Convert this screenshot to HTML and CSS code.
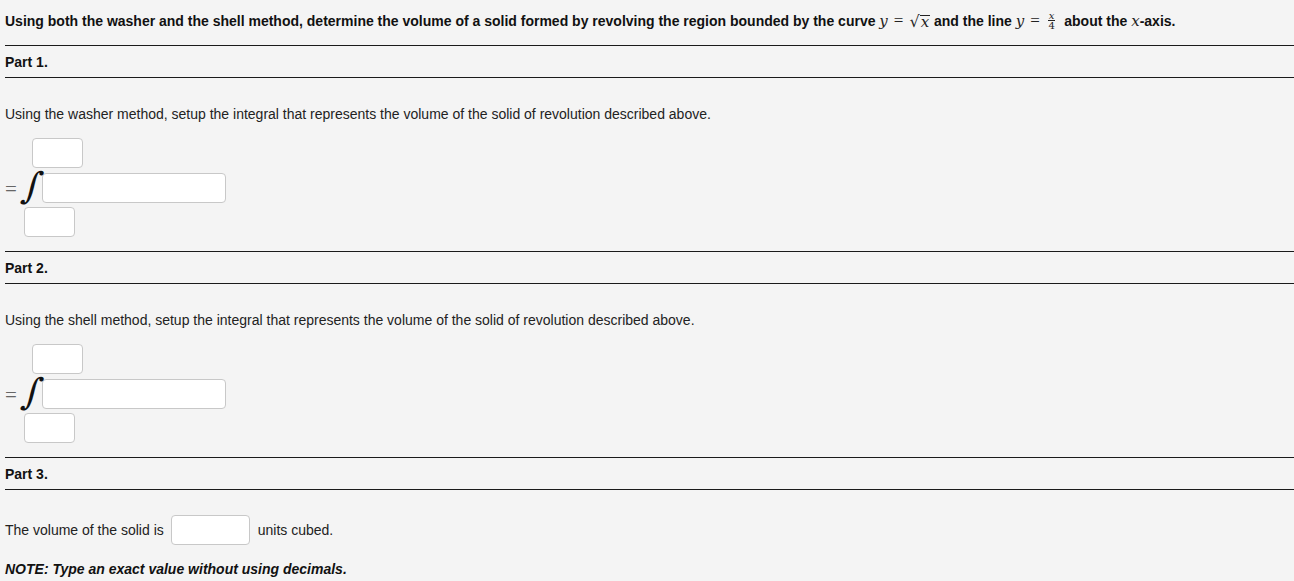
FILE: index.html
```html
<!DOCTYPE html>
<html>
<head>
<meta charset="utf-8">
<link rel="stylesheet" href="styles.css">
</head>
<body>
<div class="page">
  <p class="title">Using both the washer and the shell method, determine the volume of a solid formed by revolving the region bounded by the curve <span class="m"><i>y</i><span class="op">=</span><span class="sqrt"><span class="rad">√</span><span class="under"><i>x</i></span></span></span> and the line <span class="m"><i>y</i><span class="op">=</span><span class="frac"><span class="num"><i>x</i></span><span class="den">4</span></span></span> about the <span class="m"><i>x</i></span>-axis.</p>
  <hr class="rule">
  <p class="part">Part 1.</p>
  <hr class="rule">
  <p class="text">Using the washer method, setup the integral that represents the volume of the solid of revolution described above.</p>
  <div class="integral">
    <span class="eq">=</span>
    <div class="intcol">
      <input class="box lim upper" type="text">
      <div class="introw">
        <span class="intsign">∫</span>
        <input class="box main" type="text">
      </div>
      <input class="box lim lower" type="text">
    </div>
  </div>
  <hr class="rule r-after">
  <p class="part">Part 2.</p>
  <hr class="rule">
  <p class="text">Using the shell method, setup the integral that represents the volume of the solid of revolution described above.</p>
  <div class="integral">
    <span class="eq">=</span>
    <div class="intcol">
      <input class="box lim upper" type="text">
      <div class="introw">
        <span class="intsign">∫</span>
        <input class="box main" type="text">
      </div>
      <input class="box lim lower" type="text">
    </div>
  </div>
  <hr class="rule r-after">
  <p class="part">Part 3.</p>
  <hr class="rule">
  <div class="answer">
    <span>The volume of the solid is</span>
    <input class="box vol" type="text">
    <span class="units">units cubed.</span>
  </div>
  <p class="note">NOTE: Type an exact value without using decimals.</p>
</div>
</body>
</html>
```

FILE: styles.css
```css
html, body {
  margin: 0;
  padding: 0;
  background: #f4f4f4;
}
body {
  font-family: "Liberation Sans", Arial, sans-serif;
  font-size: 14px;
  color: #222;
}
.page {
  padding: 12px 0 0 5px;
}
p {
  margin: 0;
  line-height: 16px;
}
.title {
  font-weight: bold;
  color: #111;
  height: 16px;
  white-space: nowrap;
}
.m {
  font-weight: normal;
  font-family: "DejaVu Serif", "Liberation Serif", serif;
  font-size: 15px;
  line-height: 0;
  white-space: nowrap;
  color: #222;
}
.m i {
  font-style: italic;
}
.op {
  margin: 0 6px;
  font-style: normal;
  font-family: "Liberation Serif", serif;
  font-size: 17px;
}
.sqrt {
  display: inline-flex;
  align-items: flex-end;
  line-height: 14px;
  vertical-align: baseline;
  position: relative;
  top: 1px;
}
.rad {
  font-size: 16px;
  line-height: 14px;
  font-family: "DejaVu Serif", serif;
}
.under {
  border-top: 1px solid #222;
  line-height: 13px;
  padding: 0 1px;
}
.frac {
  display: inline-flex;
  flex-direction: column;
  vertical-align: middle;
  align-items: center;
  font-size: 10px;
  line-height: 9px;
  margin: 0 5px 0 2px;
  position: relative;
  top: -1px;
}
.frac .num {
  border-bottom: 1px solid #222;
  padding: 0 1px;
}
.rule {
  border: 0;
  border-top: 1px solid #1a1a1a;
  margin: 17px 0 0 0;
  height: 0;
}
.part {
  font-weight: bold;
  color: #111;
  margin-top: 8px;
}
.part + .rule {
  margin-top: 7px;
}
.text {
  margin-top: 28px;
}
.integral {
  display: flex;
  align-items: center;
  margin-top: 16px;
}
.eq {
  font-family: "Liberation Serif", serif;
  font-size: 21px;
  color: #666;
  width: 18px;
  line-height: 18px;
  position: relative;
  top: 1px;
}
.intcol {
  display: flex;
  flex-direction: column;
}
.introw {
  display: flex;
  align-items: center;
  margin: 5px 0 4px 0;
}
.intsign {
  font-family: "DejaVu Serif", serif;
  font-size: 36px;
  line-height: 30px;
  width: 19px;
  color: #111;
  transform: skewX(-12deg);
  position: relative;
  left: 0;
  top: -2px;
}
.box {
  box-sizing: border-box;
  height: 30px;
  border: 1px solid #c8c8c8;
  border-radius: 4px;
  background: #fff;
  margin: 0;
  padding: 0 4px;
  font: inherit;
}
.lim {
  width: 51px;
}
.upper {
  margin-left: 9px;
}
.lower {
  margin-left: 1px;
}
.main {
  width: 184px;
}
.r-after {
  margin-top: 14px;
}
.answer {
  display: flex;
  align-items: center;
  margin-top: 25px;
}
.vol {
  width: 79px;
  margin: 0 8px 0 7px;
}
.note {
  margin-top: 16px;
  font-weight: bold;
  font-style: italic;
  color: #111;
}
```
